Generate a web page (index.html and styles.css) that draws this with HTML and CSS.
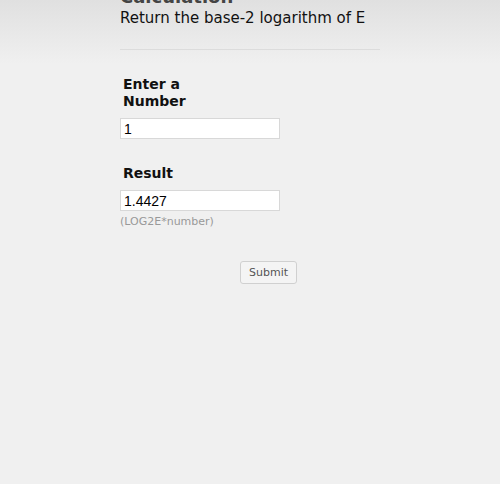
FILE: index.html
```html
<!DOCTYPE html>
<html>
<head>
<meta charset="utf-8">
<link rel="stylesheet" href="styles.css">
</head>
<body>
<div class="page">
  <div class="header">
    <h1 class="title">Calculation</h1>
    <p class="subtitle">Return the base-2 logarithm of E</p>
  </div>
  <div class="rule"></div>
  <form class="form">
    <div class="field">
      <label class="label">Enter a Number</label>
      <input class="input" type="text" value="1">
    </div>
    <div class="field">
      <label class="label">Result</label>
      <input class="input" type="text" value="1.4427">
      <div class="hint">(LOG2E*number)</div>
    </div>
    <div class="actions">
      <button class="btn" type="button">Submit</button>
    </div>
  </form>
</div>
</body>
</html>
```
FILE: styles.css
```css
html, body {
  margin: 0;
  padding: 0;
}
body {
  background: #f0f0f0 linear-gradient(to bottom, #e0e0e0 0px, #f0f0f0 64px) no-repeat;
  font-family: "DejaVu Sans", Verdana, sans-serif;
  color: #111;
  height: 484px;
}
.page {
  width: 260px;
  margin: 0 auto;
}
.header {
  margin-top: -13px;
}
.title {
  margin: 0;
  font-size: 18px;
  line-height: 20px;
  font-weight: bold;
  color: #444;
  white-space: nowrap;
}
.subtitle {
  margin: 0;
  padding-top: 1px;
  font-size: 15px;
  line-height: 21px;
  white-space: nowrap;
}
.rule {
  height: 1px;
  background: #dcdcdc;
  margin-top: 20px;
}
.form {
  padding-top: 26px;
}
.field {
  display: flex;
  flex-direction: column;
  align-items: flex-start;
  margin-bottom: 26px;
}
.label {
  width: 80px;
  padding-left: 3px;
  font-size: 14px;
  font-weight: bold;
  line-height: 17px;
  margin-bottom: 8px;
}
.input {
  box-sizing: border-box;
  width: 160px;
  height: 21px;
  margin: 0;
  border: 1px solid #d8d8d8;
  background: #fff;
  padding: 0 3px;
  font-family: "Liberation Sans", Arial, sans-serif;
  font-size: 14px;
  color: #000;
}
.hint {
  margin-top: 4px;
  font-size: 11px;
  line-height: 14px;
  color: #999;
}
.actions {
  display: flex;
  justify-content: center;
  padding-left: 37px;
  margin-top: 32px;
}
.btn {
  box-sizing: border-box;
  width: 57px;
  height: 23px;
  border: 1px solid #d0d0d0;
  border-radius: 3px;
  background: #f4f4f4;
  font-family: "DejaVu Sans", Verdana, sans-serif;
  font-size: 11px;
  color: #555;
  padding: 0;
}
```
